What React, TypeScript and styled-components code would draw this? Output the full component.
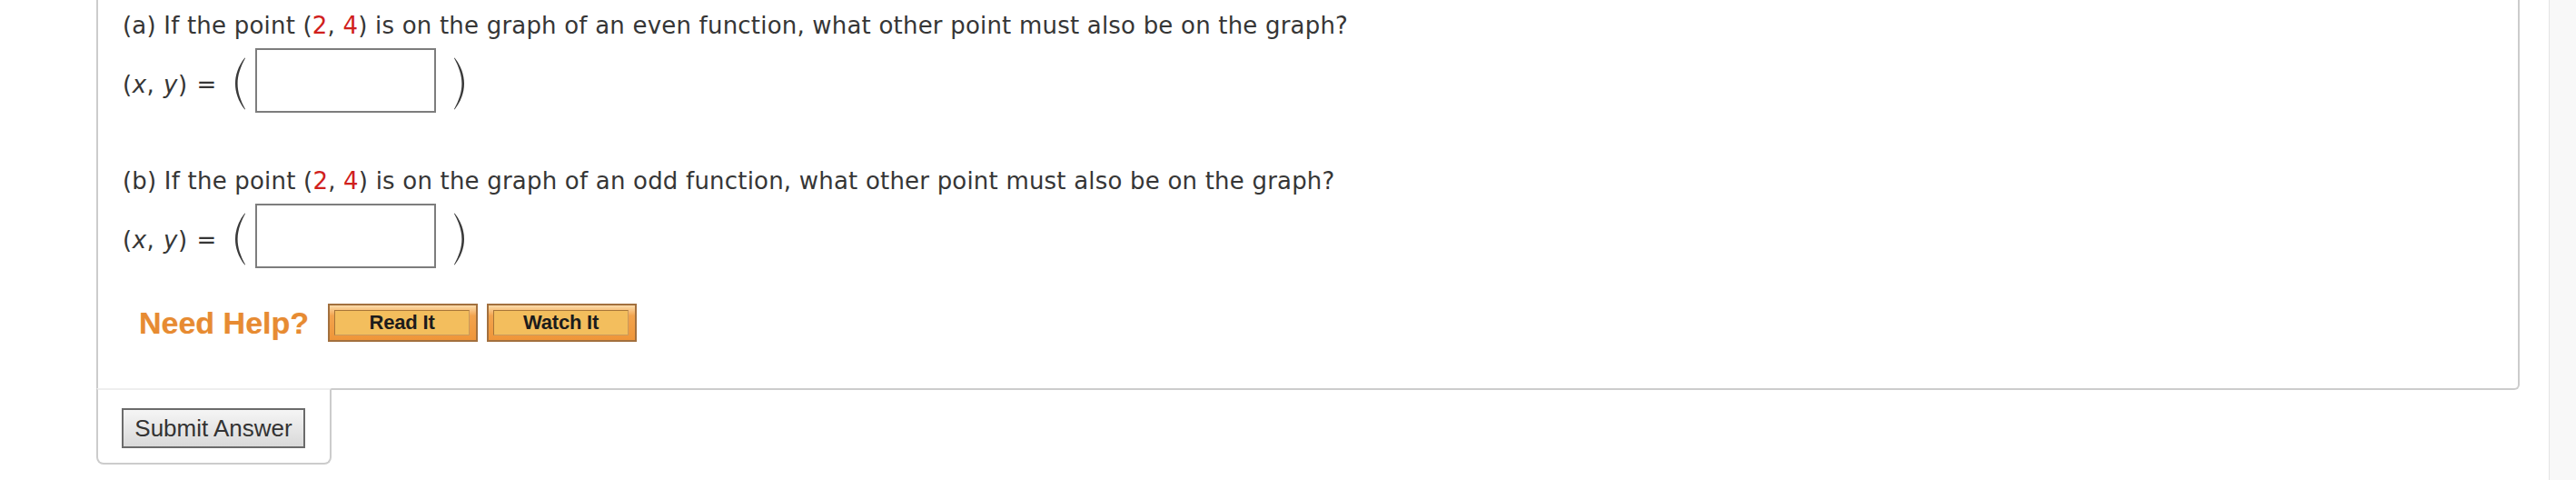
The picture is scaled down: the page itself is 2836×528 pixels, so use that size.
import React from "react";
import styled, { createGlobalStyle } from "styled-components";

const GlobalStyle = createGlobalStyle`
  * {
    box-sizing: border-box;
  }
  html, body {
    margin: 0;
    padding: 0;
    background: #fff;
  }
  body {
    font-family: "DejaVu Sans", Verdana, sans-serif;
  }
`;

const Page = styled.div`
  display: flex;
  min-height: 528px;
`;

const Main = styled.main`
  flex: 1;
  padding: 0 32px 0 106px;
`;

const SideStrip = styled.aside`
  width: 30px;
  background: #f8f8f8;
  border-left: 1px solid #e4e4e4;
`;

const Card = styled.section`
  border: 2px solid #cccccc;
  border-top: none;
  border-bottom-right-radius: 6px;
  background: #fff;
  padding: 15px 0 51px 27px;
  color: #363636;
`;

const Prompt = styled.p<{ $first?: boolean }>`
  margin: ${(p) => (p.$first ? "0" : "62px")} 0 12px 0;
  font-size: 26px;
  line-height: 26px;
  letter-spacing: 0.2px;
  white-space: nowrap;
`;

const Given = styled.span`
  color: #d0201c;
`;

const AnswerRow = styled.div`
  display: flex;
  align-items: center;
  height: 71px;
`;

const Label = styled.span`
  font-size: 26px;
  line-height: 26px;
  padding-top: 8px;
  white-space: nowrap;
  letter-spacing: 0.5px;
  word-spacing: 1px;

  i {
    font-style: italic;
  }
`;

const Paren = styled.svg<{ $gap: number }>`
  width: 14px;
  height: 58px;
  margin: 7px 0 0 ${(p) => p.$gap}px;
  flex-shrink: 0;
`;

const AnswerBox = styled.input`
  width: 199px;
  height: 71px;
  margin-left: 10px;
  border: 2px solid #7d7d7d;
  background: #fff;
  padding: 0;
  outline: none;
`;

const HelpRow = styled.div`
  display: flex;
  align-items: center;
  gap: 10px;
  margin-top: 39px;
  padding-left: 18px;
  height: 42px;
`;

const NeedHelp = styled.span`
  font-family: "Liberation Sans", Arial, sans-serif;
  font-weight: bold;
  font-size: 34px;
  line-height: 34px;
  color: #e78b32;
  margin-right: 11px;
  text-shadow: 0 0 1px rgba(231, 139, 50, 0.45);
`;

const HelpButton = styled.button`
  width: 165px;
  height: 42px;
  padding: 5px 7px 5px 5px;
  border: 2px solid #a2703e;
  background: linear-gradient(#fcdcab 0%, #f2a34d 30%, #ef9639 100%);
  cursor: pointer;
`;

const HelpInner = styled.span`
  display: flex;
  align-items: center;
  justify-content: center;
  height: 100%;
  border: 1px solid #a87638;
  border-bottom-color: #c99a5c;
  border-right-color: #c99a5c;
  background: #f3be5d;
  font-family: "Liberation Sans", Arial, sans-serif;
  font-weight: bold;
  font-size: 22px;
  color: #1c1c1c;
  letter-spacing: -0.2px;
`;

const SubmitTab = styled.div`
  width: 259px;
  margin-top: -2px;
  border: 2px solid #cccccc;
  border-top-color: #eeeeee;
  border-radius: 0 0 8px 8px;
  padding: 20px 0 16px 26px;
  background: #fff;
`;

const SubmitButton = styled.button`
  width: 202px;
  height: 44px;
  padding: 0;
  border: 2px solid #6b6b6b;
  background: linear-gradient(#f5f5f5, #d9d9d9);
  font-family: "Liberation Sans", Arial, sans-serif;
  font-size: 26px;
  color: #333;
  cursor: pointer;
`;

function LeftParen() {
  return (
    <Paren $gap={18} viewBox="0 0 14 58">
      <path
        d="M12.5 0.5 C5 10, 2 20, 2 29 C2 38, 5 48, 12.5 57.5 L13 57 C7.5 47, 4.6 38, 4.6 29 C4.6 20, 7.5 11, 13 1 Z"
        fill="#3a3a3a"
      />
    </Paren>
  );
}

function RightParen() {
  return (
    <Paren $gap={19} viewBox="0 0 14 58">
      <path
        d="M1.5 0.5 C9 10, 12 20, 12 29 C12 38, 9 48, 1.5 57.5 L1 57 C6.5 47, 9.4 38, 9.4 29 C9.4 20, 6.5 11, 1 1 Z"
        fill="#3a3a3a"
      />
    </Paren>
  );
}

function Question({ part, kind, first }: { part: string; kind: string; first?: boolean }) {
  return (
    <>
      <Prompt $first={first}>
        ({part}) If the point (<Given>2</Given>, <Given>4</Given>) is on the graph of an {kind} function,
        what other point must also be on the graph?
      </Prompt>
      <AnswerRow>
        <Label>
          (<i>x</i>, <i>y</i>) =
        </Label>
        <LeftParen />
        <AnswerBox type="text" aria-label={`answer ${part}`} />
        <RightParen />
      </AnswerRow>
    </>
  );
}

export default function App() {
  return (
    <>
      <GlobalStyle />
      <Page>
        <Main>
          <Card>
            <Question part="a" kind="even" first />
            <Question part="b" kind="odd" />
            <HelpRow>
              <NeedHelp>Need Help?</NeedHelp>
              <HelpButton>
                <HelpInner>Read It</HelpInner>
              </HelpButton>
              <HelpButton>
                <HelpInner>Watch It</HelpInner>
              </HelpButton>
            </HelpRow>
          </Card>
          <SubmitTab>
            <SubmitButton>Submit Answer</SubmitButton>
          </SubmitTab>
        </Main>
        <SideStrip />
      </Page>
    </>
  );
}
